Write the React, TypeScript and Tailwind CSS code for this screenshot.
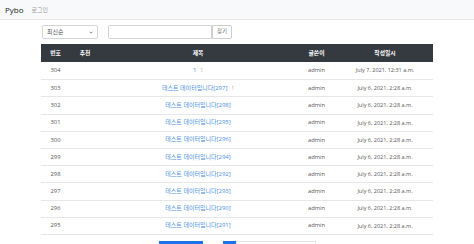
import React from "react";

const rows = [
  { no: 304, title: "1", count: 1, author: "admin", date: "July 7, 2021, 12:31 a.m." },
  { no: 303, title: "테스트 데이터입니다[297]", count: 1, author: "admin", date: "July 6, 2021, 2:28 a.m." },
  { no: 302, title: "테스트 데이터입니다[298]", author: "admin", date: "July 6, 2021, 2:28 a.m." },
  { no: 301, title: "테스트 데이터입니다[295]", author: "admin", date: "July 6, 2021, 2:28 a.m." },
  { no: 300, title: "테스트 데이터입니다[296]", author: "admin", date: "July 6, 2021, 2:28 a.m." },
  { no: 299, title: "테스트 데이터입니다[294]", author: "admin", date: "July 6, 2021, 2:28 a.m." },
  { no: 298, title: "테스트 데이터입니다[292]", author: "admin", date: "July 6, 2021, 2:28 a.m." },
  { no: 297, title: "테스트 데이터입니다[293]", author: "admin", date: "July 6, 2021, 2:28 a.m." },
  { no: 296, title: "테스트 데이터입니다[290]", author: "admin", date: "July 6, 2021, 2:28 a.m." },
  { no: 295, title: "테스트 데이터입니다[291]", author: "admin", date: "July 6, 2021, 2:28 a.m." },
];

const font = { fontFamily: '"Open Sans", "Noto Sans CJK KR", sans-serif' };

export default function App() {
  return (
    <div className="w-[474px] h-[244px] overflow-hidden bg-white text-[#333]" style={font}>
      <div className="h-[20px] bg-[#f8f9fa] border-b border-[#e5e5e5] flex items-center pl-[5px]">
        <span className="text-[8px] text-[#222] leading-none">Pybo</span>
        <span className="ml-[8px] text-[6px] text-[#9a9a9a] leading-none">로그인</span>
      </div>
      <div className="w-[392px] mx-auto">
        <div className="flex items-center h-[15px] mt-[4.5px]">
          <div className="ml-[1px] w-[56px] h-[14px] border border-[#d5d5d5] rounded-[2px] flex items-center justify-between px-[4px]">
            <span className="text-[6px] leading-none text-[#555]">최신순</span>
            <svg width="4" height="3" viewBox="0 0 4 3"><path d="M0.5 0.7 L2 2.2 L3.5 0.7" stroke="#555" strokeWidth="0.7" fill="none" /></svg>
          </div>
          <div className="ml-[10px] w-[104px] h-[14px] border border-[#d5d5d5] rounded-l-[2px]" />
          <div className="w-[20px] h-[14px] border border-[#ccc] rounded-r-[2px] flex items-center justify-center">
            <span className="text-[5.5px] leading-none text-[#777]">찾기</span>
          </div>
        </div>
        <div className="mt-[4.5px]">
          <div className="grid grid-cols-[29px_30px_196px_41px_96px] h-[18px] bg-[#343a40] text-white text-[5.8px] font-bold items-center text-center">
            <span>번호</span>
            <span>추천</span>
            <span>제목</span>
            <span>글쓴이</span>
            <span>작성일시</span>
          </div>
          {rows.map((r, i) => (
            <div
              key={r.no}
              className={`grid grid-cols-[29px_30px_196px_41px_96px] h-[17.2px] items-center text-center text-[5.8px] ${i > 0 ? "border-t border-[#e6e6e6]" : ""}`}
            >
              <span className="text-[#555]">{r.no}</span>
              <span />
              <span className="text-[6px]">
                <span className="text-[#4a8fe0]">{r.title}</span>
                {r.count ? <span className="ml-[4px] text-[#d98a94] text-[4.5px]">{r.count}</span> : null}
              </span>
              <span className="text-[#555]">{r.author}</span>
              <span className="text-[#555] text-[5.5px]">{r.date}</span>
            </div>
          ))}
          <div className="border-t border-[#e6e6e6]" />
        </div>
        <div className="relative h-[20px]">
          <div className="absolute left-[118px] top-[6px] w-[44px] h-[10px] bg-[#1a73e8]" />
          <div className="absolute left-[182px] top-[6px] w-[13px] h-[10px] bg-[#1a73e8]" />
          <div className="absolute left-[195px] top-[6px] w-[80px] h-[10px] border border-[#e5e5e5]" />
        </div>
      </div>
    </div>
  );
}
